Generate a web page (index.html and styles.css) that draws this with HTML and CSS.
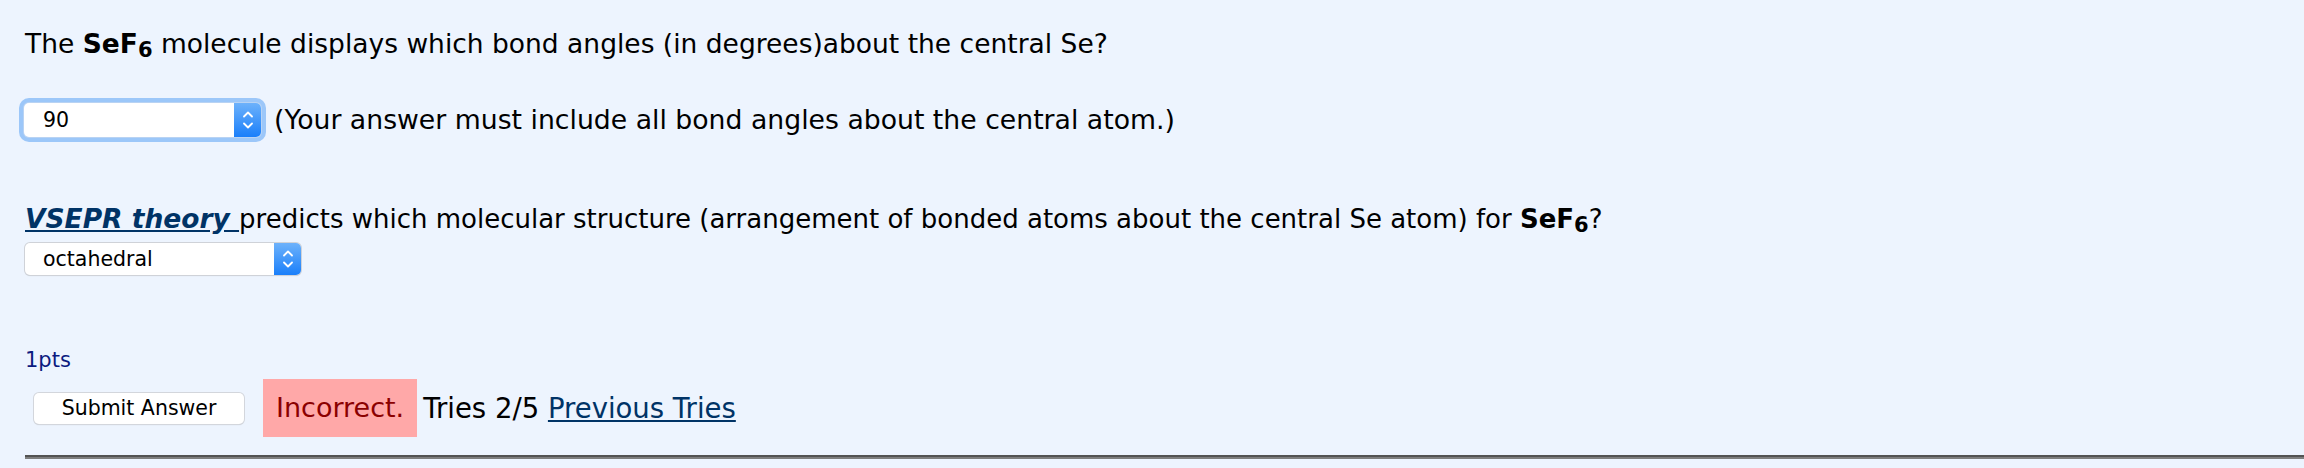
FILE: index.html
```html
<!DOCTYPE html>
<html>
<head>
<meta charset="utf-8">
<link rel="stylesheet" href="styles.css">
</head>
<body>
<div class="page">
  <p class="q1">The <b>SeF<span class="sub">6</span></b> molecule displays which bond angles (in degrees)about the central Se?</p>
  <div class="row1">
    <div class="select sel-angle">
      <span class="sel-text">90</span>
      <span class="sel-arrow"><svg width="10" height="22" viewBox="0 0 10 22"><path d="M1 7.5 L5 3.5 L9 7.5 M1 14.5 L5 18.5 L9 14.5" fill="none" stroke="#fff" stroke-width="1.8" stroke-linecap="round" stroke-linejoin="round"/></svg></span>
    </div>
    <span class="hint">(Your answer must include all bond angles about the central atom.)</span>
  </div>
  <p class="q2"><a class="link vsepr" href="#">VSEPR theory </a>predicts which molecular structure (arrangement of bonded atoms about the central Se atom) for <b>SeF<span class="sub">6</span></b>?</p>
  <div class="select sel-struct">
    <span class="sel-text">octahedral</span>
    <span class="sel-arrow"><svg width="10" height="22" viewBox="0 0 10 22"><path d="M1 7.5 L5 3.5 L9 7.5 M1 14.5 L5 18.5 L9 14.5" fill="none" stroke="#fff" stroke-width="1.8" stroke-linecap="round" stroke-linejoin="round"/></svg></span>
  </div>
  <div class="pts">1pts</div>
  <div class="actions">
    <div class="btn">Submit Answer</div>
    <span class="incorrect">Incorrect.</span>
    <span class="tries">Tries 2/5 <a class="link" href="#">Previous Tries</a></span>
  </div>
  <div class="rule"></div>
</div>
</body>
</html>
```
FILE: styles.css
```css
html, body {
  margin: 0;
  padding: 0;
}
body {
  background: #edf4fe;
  font-family: "DejaVu Sans", Verdana, sans-serif;
  color: #000;
  width: 2304px;
  height: 468px;
  overflow: hidden;
}
.page {
  padding-left: 25px;
  padding-top: 29px;
}
.q1, .q2 {
  margin: 0;
  font-size: 26px;
  line-height: 30px;
}
.q1 {
  font-size: 26.5px;
}
.sub {
  font-size: 21px;
  line-height: 0;
  vertical-align: -4px;
}
.row1 {
  display: flex;
  align-items: center;
  margin-top: 44px;
  height: 34px;
}
.select {
  display: flex;
  align-items: stretch;
  background: #fff;
  border-radius: 5px;
  box-shadow: 0 0 0 1px #cfd2d8, 0 1px 1px rgba(0, 0, 0, 0.18);
  font-size: 20.5px;
  color: #000;
}
.sel-angle {
  width: 237px;
  height: 34px;
  margin-left: -1px;
  box-shadow: 0 0 0 1px #b9d3f3, 0 0 0 5px #9cc7f9;
}
.sel-struct {
  width: 276px;
  height: 32px;
  margin-top: 9px;
}
.sel-text {
  flex: 1;
  padding-left: 19px;
  display: flex;
  align-items: center;
}
.sel-struct .sel-text {
  padding-left: 18px;
}
.sel-arrow {
  width: 27px;
  background: linear-gradient(#6db2fb, #1a7ffa);
  border-radius: 0 5px 5px 0;
  display: flex;
  align-items: center;
  justify-content: center;
}
.hint {
  margin-left: 13px;
  font-size: 26.7px;
  line-height: 30px;
}
.q2 {
  margin-top: 67px;
}
.link {
  color: #003366;
  text-decoration: underline;
}
.vsepr {
  font-weight: bold;
  font-style: italic;
  font-size: 26.5px;
}
.pts {
  margin-top: 73px;
  font-size: 21px;
  line-height: 24px;
  color: #0b1a80;
}
.actions {
  display: flex;
  align-items: center;
  margin-top: 7px;
  height: 58px;
}
.btn {
  margin-left: 9px;
  width: 210px;
  height: 31px;
  background: #fff;
  border-radius: 5px;
  box-shadow: 0 0 0 1px #d3d6dc, 0 1px 1px rgba(0, 0, 0, 0.2);
  font-size: 20.5px;
  display: flex;
  align-items: center;
  justify-content: center;
}
.incorrect {
  margin-left: 19px;
  background: #ffa8a8;
  color: #8b0000;
  font-size: 27px;
  line-height: 30px;
  padding: 14px 13px;
}
.tries {
  margin-left: 6px;
  font-size: 27.5px;
  line-height: 30px;
}
.rule {
  margin-top: 18px;
  height: 2px;
  border-top: 2px solid #535353;
  background: #7e7e7e;
}
```
